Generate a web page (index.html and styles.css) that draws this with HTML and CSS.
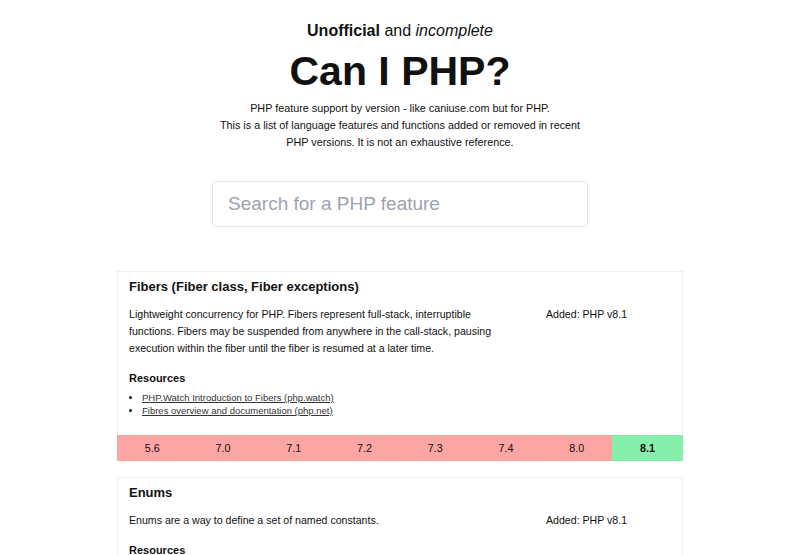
FILE: index.html
```html
<!DOCTYPE html>
<html lang="en">
<head>
  <meta charset="UTF-8" />
  <title>Can I PHP?</title>
  <meta name="viewport" content="width=device-width, initial-scale=1" />
  <link rel="stylesheet" href="styles.css">
</head>
<body>
  <header class="intro">
    <p class="tagline"><strong>Unofficial</strong> and <em>incomplete</em></p>
    <h1 class="title">Can I PHP?</h1>
    <p class="lead">
      PHP feature support by version - like caniuse.com but for PHP.<br>
      This is a list of language features and functions added or removed in recent PHP versions. It is not an exhaustive reference.
    </p>
    <input class="search" type="text" placeholder="Search for a PHP feature">
  </header>

  <main class="features">
    <!-- Fibers -->
    <section class="feature">
      <div class="feature-body">
        <h2 class="feature-name">Fibers (Fiber class, Fiber exceptions)</h2>
        <div class="feature-row">
          <p class="feature-desc">Lightweight concurrency for PHP. Fibers represent full-stack, interruptible functions. Fibers may be suspended from anywhere in the call-stack, pausing execution within the fiber until the fiber is resumed at a later time.</p>
          <div class="feature-added">Added: PHP v8.1</div>
        </div>
        <h3 class="resources-title">Resources</h3>
        <ul class="resources">
          <li><a href="#">PHP.Watch Introduction to Fibers (php.watch)</a></li>
          <li><a href="#">Fibres overview and documentation (php.net)</a></li>
        </ul>
      </div>
      <div class="versions">
        <span class="ver no">5.6</span>
        <span class="ver no">7.0</span>
        <span class="ver no">7.1</span>
        <span class="ver no">7.2</span>
        <span class="ver no">7.3</span>
        <span class="ver no">7.4</span>
        <span class="ver no">8.0</span>
        <span class="ver yes">8.1</span>
      </div>
    </section>

    <!-- Enums -->
    <section class="feature">
      <div class="feature-body">
        <h2 class="feature-name">Enums</h2>
        <div class="feature-row">
          <p class="feature-desc">Enums are a way to define a set of named constants.</p>
          <div class="feature-added">Added: PHP v8.1</div>
        </div>
        <h3 class="resources-title">Resources</h3>
        <ul class="resources">
          <li><a href="#">PHP.Watch Introduction to Enums (php.watch)</a></li>
          <li><a href="#">Enumerations (php.net)</a></li>
        </ul>
      </div>
    </section>
  </main>
</body>
</html>
```

FILE: styles.css
```css
html, body {
  margin: 0;
  padding: 0;
  background: #fff;
  color: #111;
  font-family: "Liberation Sans", Arial, sans-serif;
}

.intro {
  display: flex;
  flex-direction: column;
  align-items: center;
  text-align: center;
  padding-top: 20px;
}

.tagline {
  margin: 0;
  font-size: 16px;
  line-height: 22px;
}

.tagline strong {
  font-weight: 700;
}

.title {
  margin: 6px 0 0;
  font-size: 41px;
  line-height: 46px;
  font-weight: 700;
}

.lead {
  margin: 6px 0 0;
  width: 375px;
  font-size: 10.8px;
  line-height: 17px;
}

.search {
  margin-top: 30px;
  width: 376px;
  height: 46px;
  box-sizing: border-box;
  padding: 0 15px;
  border: 1px solid #e5e7eb;
  border-radius: 4px;
  font-family: inherit;
  font-size: 19px;
  color: #111;
  outline: none;
}

.search::placeholder {
  color: #9ca3af;
}

.features {
  width: 566px;
  margin: 44px auto 0;
  display: flex;
  flex-direction: column;
  gap: 16px;
}

.feature {
  border: 1px solid #f0f0f0;
  border-bottom: none;
}

.feature-body {
  padding: 6px 11px 18px;
}

.feature-name {
  margin: 0;
  font-size: 13px;
  line-height: 18px;
  font-weight: 700;
}

.feature-row {
  display: flex;
  justify-content: space-between;
  margin-top: 10px;
}

.feature-desc {
  margin: 0;
  width: 370px;
  font-size: 10.6px;
  line-height: 17px;
}

.feature-added {
  width: 125px;
  font-size: 10.6px;
  line-height: 17px;
}

.resources-title {
  margin: 13px 0 0;
  font-size: 11px;
  line-height: 17px;
  font-weight: 700;
}

.resources {
  margin: 4px 0 0;
  padding-left: 13px;
  font-size: 9.5px;
  line-height: 13px;
}

.resources a {
  color: #333;
}

.versions {
  display: grid;
  grid-template-columns: repeat(8, 1fr);
  margin: 0 -1px;
}

.ver {
  height: 26px;
  display: flex;
  align-items: center;
  justify-content: center;
  font-size: 10.8px;
}

.no {
  background: #fca5a5;
}

.yes {
  background: #86efac;
  font-weight: 700;
}
```
